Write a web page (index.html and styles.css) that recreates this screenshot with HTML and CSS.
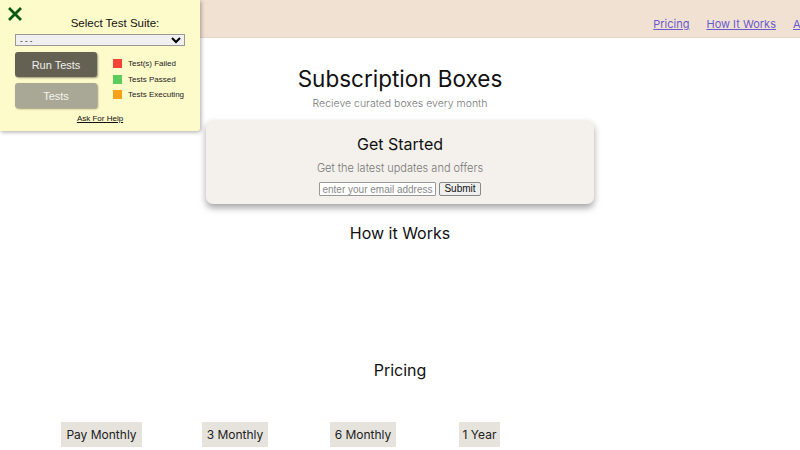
FILE: index.html
```html
<!DOCTYPE html>
<html>
<head>
<meta charset="utf-8">
<link rel="stylesheet" href="styles.css">
</head>
<body>
<header class="topbar">
  <div class="logo">SBx</div>
  <nav class="nav">
    <a href="#pricing">Pricing</a>
    <a href="#how">How It Works</a>
    <a href="#about">About</a>
  </nav>
</header>
<main class="main">
  <section class="hero">
    <h1 class="title">Subscription Boxes</h1>
    <p class="subtitle">Recieve curated boxes every month</p>
  </section>
  <section class="card">
    <h2 class="card-title">Get Started</h2>
    <p class="card-sub">Get the latest updates and offers</p>
    <form class="form">
      <input class="email" type="email" placeholder="enter your email address">
      <button class="submit" type="button">Submit</button>
    </form>
  </section>
  <section class="how" id="how">
    <h2 class="section-title">How it Works</h2>
  </section>
  <section class="pricing" id="pricing">
    <h2 class="section-title">Pricing</h2>
    <div class="plans">
      <div class="plan">Pay Monthly</div>
      <div class="plan">3 Monthly</div>
      <div class="plan">6 Monthly</div>
      <div class="plan">1 Year</div>
    </div>
  </section>
</main>

<div class="test-panel">
  <svg class="close" width="14" height="14" viewBox="0 0 14 14">
    <path d="M2 2 L12 12 M12 2 L2 12" stroke="#0b5a14" stroke-width="2.8" stroke-linecap="square"/>
  </svg>
  <div class="panel-title">Select Test Suite:</div>
  <select class="suite"><option>- - -</option></select>
  <div class="panel-row">
    <div class="btns">
      <button class="btn btn-run" type="button">Run Tests</button>
      <button class="btn btn-tests" type="button">Tests</button>
    </div>
    <ul class="legend">
      <li><span class="sq sq-fail"></span>Test(s) Failed</li>
      <li><span class="sq sq-pass"></span>Tests Passed</li>
      <li><span class="sq sq-exec"></span>Tests Executing</li>
    </ul>
  </div>
  <a class="help" href="#">Ask For Help</a>
</div>
</body>
</html>
```
FILE: styles.css
```css
* { box-sizing: border-box; }
html, body { margin: 0; padding: 0; }
body {
  font-family: "Inter", "DejaVu Sans", sans-serif;
  background: #fff;
  color: #222;
  width: 800px;
  overflow: hidden;
}
.topbar {
  height: 38px;
  background: #f1e1d3;
  border-bottom: 1px solid #e6d6c8;
  display: flex;
  align-items: center;
  justify-content: space-between;
  padding: 11px 0 0 38px;
}
.logo {
  font-size: 12px;
  color: #e9dccf;
}
.nav {
  display: flex;
  gap: 17px;
  margin-right: -24px;
}
.nav a {
  font-size: 11px;
  color: #6a5acd;
  text-decoration: underline;
}
.main {
  display: flex;
  flex-direction: column;
  align-items: center;
}
.hero { text-align: center; padding-top: 26px; }
.title {
  margin: 0;
  font-size: 22.5px;
  font-weight: 400;
  line-height: 30px;
  color: #111;
}
.subtitle {
  margin: 3px 0 0;
  font-size: 10.5px;
  color: #777;
  font-weight: 300;
}
.card {
  margin-top: 10px;
  width: 388px;
  height: 84px;
  background: #f4f1ec;
  border-radius: 7px;
  box-shadow: 0 4px 7px rgba(0,0,0,0.35);
  text-align: center;
  padding-top: 14px;
}
.card-title {
  margin: 0;
  font-size: 16px;
  font-weight: 400;
  line-height: 20px;
  color: #111;
}
.card-sub {
  margin: 7px 0 0;
  font-size: 11px;
  color: #777;
  font-weight: 300;
}
.form {
  margin-top: 7px;
  display: flex;
  justify-content: center;
  gap: 3px;
}
.email {
  width: 117px;
  height: 14px;
  font-family: "Liberation Sans", Arial, sans-serif;
  font-size: 10px;
  padding: 0 2px;
  border: 1px solid #999;
  border-radius: 1px;
}
.email::placeholder { color: #888; }
.submit {
  height: 14px;
  font-family: "Liberation Sans", Arial, sans-serif;
  font-size: 10px;
  padding: 0 4px;
  border: 1px solid #888;
  border-radius: 2px;
  background: #efefef;
  color: #111;
  line-height: 12px;
}
.section-title {
  margin: 0;
  font-size: 16px;
  font-weight: 400;
  line-height: 20px;
  color: #111;
  text-align: center;
}
.how { margin-top: 19px; height: 137px; }
.pricing { width: 800px; }
.plans {
  display: flex;
  padding-left: 61px;
  margin-top: 42px;
}
.plan {
  background: #e6e3dd;
  font-size: 12px;
  color: #222;
  height: 25px;
  line-height: 25px;
  padding: 0;
  text-align: center;
  white-space: nowrap;
  flex: none;
}
.plan:nth-child(1) { width: 81px; }
.plan:nth-child(2) { width: 66px; margin-left: 60px; }
.plan:nth-child(3) { width: 66px; margin-left: 62px; }
.plan:nth-child(4) { width: 41px; margin-left: 63px; }
.test-panel {
  position: absolute;
  left: 0;
  top: 0;
  width: 200px;
  height: 131px;
  background: #fefbca;
  box-shadow: 1px 1px 4px rgba(0,0,0,0.35);
  border-bottom-right-radius: 3px;
  font-family: "Liberation Sans", Arial, sans-serif;
  padding: 0 15px;
}
.close {
  position: absolute;
  left: 8px;
  top: 7px;
}
.panel-title {
  text-align: center;
  font-size: 11.5px;
  color: #111;
  padding: 17px 0 0 30px;
  line-height: 13px;
}
.suite {
  display: block;
  margin-top: 4px;
  width: 170px;
  height: 12px;
  font-size: 8px;
  padding: 0;
  border: 1px solid #999;
  background: #f0f0f0;
}
.panel-row {
  display: flex;
  margin-top: 6px;
}
.btns {
  display: flex;
  flex-direction: column;
  gap: 6px;
  flex: none;
}
.btn {
  width: 82px;
  height: 25px;
  border: none;
  border-radius: 3px;
  font-family: "Liberation Sans", Arial, sans-serif;
  font-size: 11px;
  box-shadow: 1px 1px 2px rgba(0,0,0,0.4);
}
.btn-run { background: #646152; color: #eee; }
.btn-tests { background: #a9a795; color: #f4f4f0; }
.legend {
  list-style: none;
  margin: 7px -20px 0 16px;
  padding: 0;
  display: flex;
  flex-direction: column;
  gap: 6.5px;
  flex: none;
}
.legend li {
  display: flex;
  align-items: center;
  font-size: 8px;
  color: #222;
  height: 9px;
  white-space: nowrap;
}
.sq {
  width: 9px;
  height: 9px;
  margin-right: 6px;
  display: inline-block;
  flex: none;
}
.sq-fail { background: #f44336; }
.sq-pass { background: #5ccc5c; }
.sq-exec { background: #f8a21c; }
.help {
  display: block;
  text-align: center;
  font-size: 8px;
  color: #111;
  margin-top: 6px;
}
```
